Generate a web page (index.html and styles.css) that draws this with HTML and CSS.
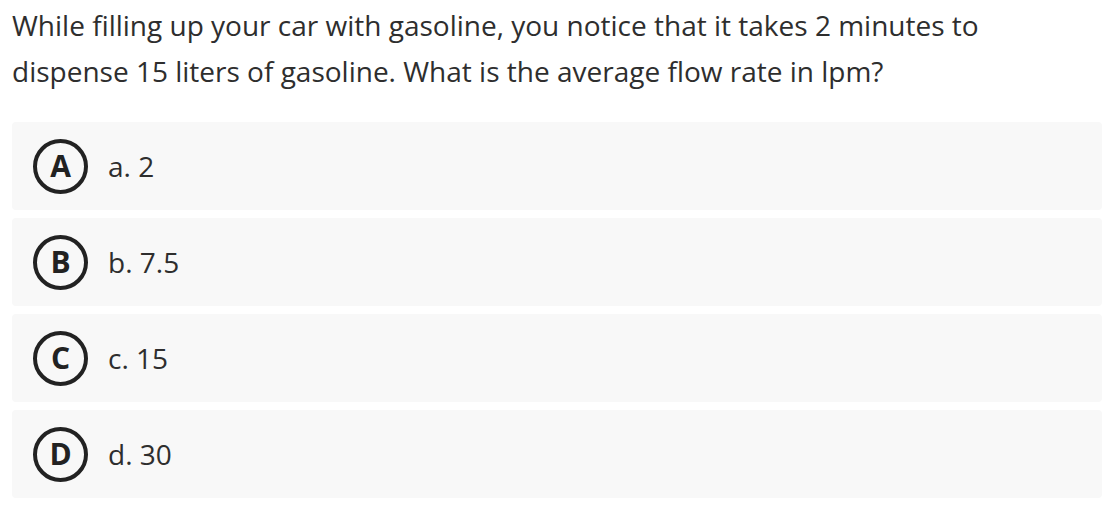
FILE: index.html
```html
<!DOCTYPE html>
<html>
<head>
<meta charset="utf-8">
<link rel="stylesheet" href="styles.css">
</head>
<body>
<div class="page">
  <p class="question">While filling up your car with gasoline, you notice that it takes 2 minutes to dispense 15 liters of gasoline. What is the average flow rate in lpm?</p>
  <div class="options">
    <div class="option"><span class="letter">A</span><span class="text">a. 2</span></div>
    <div class="option"><span class="letter">B</span><span class="text">b. 7.5</span></div>
    <div class="option"><span class="letter">C</span><span class="text">c. 15</span></div>
    <div class="option"><span class="letter">D</span><span class="text">d. 30</span></div>
  </div>
</div>
</body>
</html>
```

FILE: styles.css
```css
html, body {
  margin: 0;
  padding: 0;
  background: #ffffff;
}
.page {
  padding: 0 18px 0 12px;
  font-family: "Open Sans", "Noto Sans", sans-serif;
  color: #2e2e2e;
}
.question {
  margin: 0;
  padding-top: 2px;
  font-size: 28px;
  line-height: 46px;
  width: 1000px;
}
.options {
  margin-top: 28px;
  display: flex;
  flex-direction: column;
  gap: 8px;
}
.option {
  height: 88px;
  background: #f8f8f8;
  border-radius: 4px;
  display: flex;
  align-items: center;
  padding-left: 21px;
}
.letter {
  box-sizing: border-box;
  width: 55px;
  height: 55px;
  border: 4px solid #222222;
  border-radius: 50%;
  display: flex;
  align-items: center;
  justify-content: center;
  font-weight: 700;
  font-size: 30px;
  line-height: 1;
  color: #222222;
}
.text {
  margin-left: 20px;
  font-size: 28px;
  color: #2e2e2e;
}
```
